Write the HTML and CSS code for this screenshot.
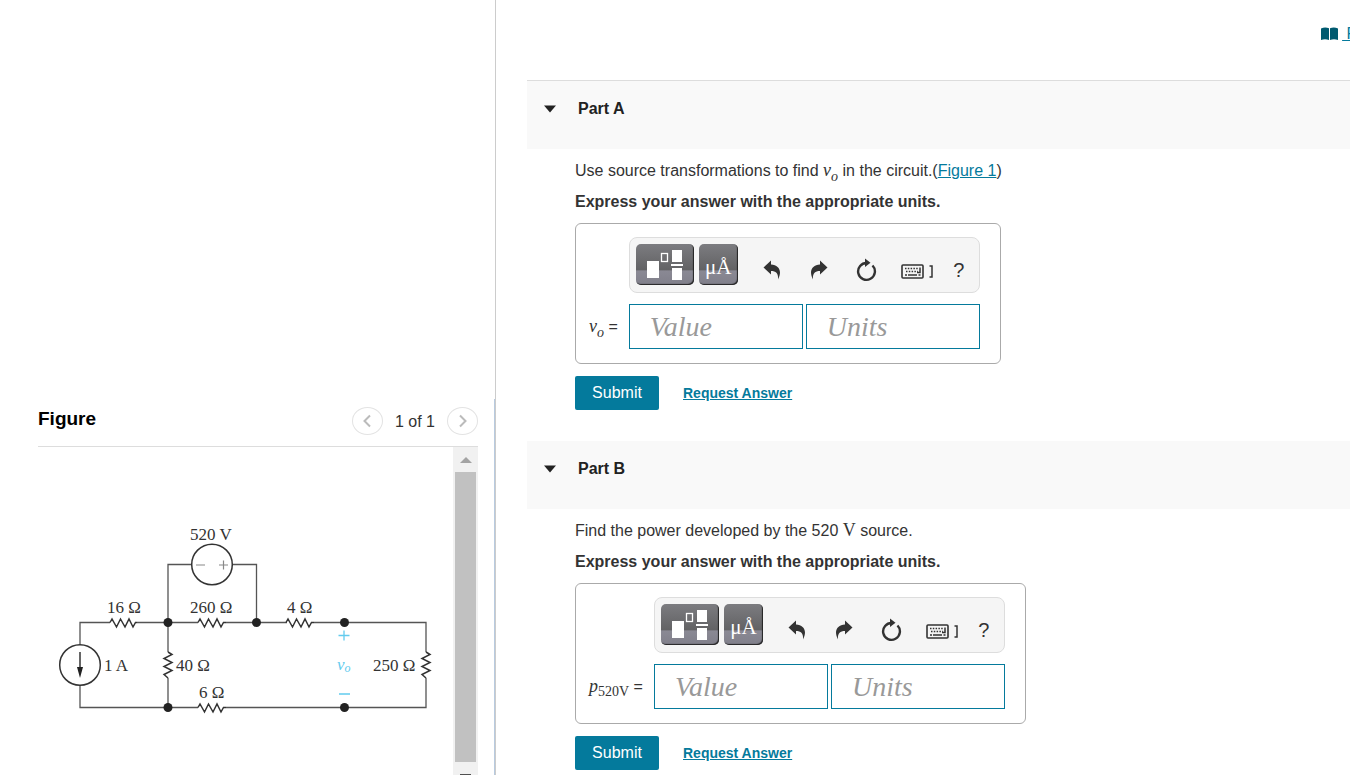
FILE: index.html
```html
<!DOCTYPE html>
<html lang="en">
<head>
<meta charset="utf-8">
<meta name="viewport" content="width=device-width, initial-scale=1">
<title>Source transformations</title>
<link rel="stylesheet" href="styles.css">
</head>
<body>
<svg class="defs" aria-hidden="true">
  <defs>
    <symbol id="i-template" viewBox="0 0 38 32">
      <g fill="#fff"><rect x="1" y="12" width="12" height="17"/><rect x="26" y="1" width="10" height="12"/><rect x="26" y="19" width="10" height="12"/><rect x="25" y="15" width="12" height="2"/></g>
      <rect x="15.500" y="4.500" width="6" height="8" fill="none" stroke="#fff" stroke-width="1.300"/>
    </symbol>
    <symbol id="i-undo" viewBox="0 0 18 20">
      <path fill="#333" d="M.5 7.500 8 .5v4C16 5 19.500 11 15 19.500 15.500 14 13.500 11 8 11v3.500z"/>
    </symbol>
    <symbol id="i-reset" viewBox="0 0 22 24">
      <path d="M12 5A8.400 8.400 0 1 0 17.500 7.500" fill="none" stroke="#333" stroke-width="2.400"/>
      <path d="M10 .5 15.500 4.800 10 9z" fill="#333"/>
    </symbol>
    <symbol id="i-keyboard" viewBox="0 0 33 16">
      <rect x="1" y="1" width="21" height="13" rx="1" fill="none" stroke="#333" stroke-width="1.600"/>
      <path d="M4 4.500h13M5 7.500h12" stroke="#333" stroke-width="1.600" stroke-dasharray="1.500 1.300"/>
      <path d="M4 11h2M7 11h9M17.500 11h2M19 3.500v5h-3" fill="none" stroke="#333" stroke-width="1.500"/>
      <path d="M28.500 2h2.500v11h-2.500" fill="none" stroke="#333" stroke-width="1.500"/>
    </symbol>
    <symbol id="i-caret" viewBox="0 0 14 8"><path d="M1 .5h12L7 7.500z" fill="#222"/></symbol>
  </defs>
</svg>
<div class="page">
  <aside class="side">
    <div class="side-top"></div>
    <section class="figure-panel">
      <header class="figure-head">
        <h2>Figure</h2>
        <nav class="pager" aria-label="Figures">
          <button type="button" aria-label="Previous figure"><svg width="10" height="14" viewBox="0 0 10 14"><path d="M8 1.500 2.500 7 8 12.500"/></svg></button>
          <span>1 of 1</span>
          <button type="button" aria-label="Next figure"><svg width="10" height="14" viewBox="0 0 10 14"><path d="M2 1.500 7.500 7 2 12.500"/></svg></button>
        </nav>
      </header>
      <div class="figure-view">
        <svg class="circuit" viewBox="38 447 415 328" role="img" aria-label="Circuit diagram">
          <g fill="none" stroke="#555" stroke-width="1.300">
            <path d="M80 644.500V622.500h30M137 622.500h61M226 622.500h61M314 622.500h112V652M426 678v29.500H226M198 707.500H80V685.500M168 622v30M168 678v29M168 622v-57.500h23.500M232.500 564.500h24V622"/>
          </g>
          <g fill="none" stroke="#333" stroke-width="1.500" stroke-linejoin="miter">
            <path d="M110 622.500l2-3.500 4.500 8 4-8 4.500 8 4-8 4 8 2.500-4.500h1.500"/>
            <path d="M198 622.500l2-3.500 4.500 8 4-8 4.500 8 4-8 4 8 2.500-4.500h2.500"/>
            <path d="M286 622.500l2-3.500 4.500 8 4-8 4.500 8 4-8 4 8 2.500-4.500h2.500"/>
            <path d="M198 707.500l2-3.500 4.500 8 4-8 4.500 8 4-8 4 8 2.500-4.500h2.500"/>
            <path d="M168 652l4 2.500-8 4 8 4-8 4 8 4-8 4 4 3.500"/>
            <path d="M426 652l4 2.500-8 4 8 4-8 4 8 4-8 4 4 3.500"/>
            <circle cx="212" cy="564.500" r="20.300"/><circle cx="80" cy="665" r="20.300"/>
            <path d="M80 652v18"/>
          </g>
          <path d="M77 667h6l-3 11z" fill="#222"/>
          <path d="M196 565h9M219 565h9M223.500 560.500v9" stroke="#888" stroke-width="1.200"/>
          <g fill="#222"><circle cx="168" cy="622.500" r="4.500"/><circle cx="256.500" cy="622.500" r="4.500"/><circle cx="344.500" cy="622.500" r="4.500"/><circle cx="168" cy="707.500" r="4.500"/><circle cx="344.500" cy="707.500" r="4.500"/></g>
          <path d="M338.500 635.500h11M344 630.500v10M339 694h11" stroke="#62cbee" stroke-width="1.300"/>
          <g class="circuit-text">
            <text x="190" y="540">520 V</text><text x="107" y="613">16 Ω</text><text x="190" y="613">260 Ω</text>
            <text x="287" y="613">4 Ω</text><text x="104" y="671">1 A</text><text x="176" y="671">40 Ω</text>
            <text x="199" y="698">6 Ω</text><text x="373" y="671">250 Ω</text>
            <text x="337" y="670" class="circuit-v">v<tspan class="circuit-sub" dy="2">o</tspan></text>
          </g>
        </svg>
        <div class="scrollbar" aria-hidden="true">
          <span class="arrow-up"></span>
          <span class="thumb"></span>
          <span class="arrow-down"></span>
        </div>
      </div>
    </section>
  </aside>
  <main class="main">
    <div class="resources">
      <svg width="17" height="14" viewBox="0 0 17 14"><path d="M0 1.500Q4-.2 8 1.300V13Q4 11.500 0 13zM9 1.300Q13-.2 17 1.500V13Q13 11.500 9 13z" fill="#005a70"/></svg>
      <a href="#review">&nbsp;Review</a>
    </div>

    <section class="part">
      <button type="button" class="part-head part-head-first" aria-expanded="true">
        <svg width="14" height="8"><use href="#i-caret"/></svg><span>Part A</span>
      </button>
      <div class="part-body">
        <p>Use source transformations to find <i class="math">v<sub>o</sub></i> in the circuit.(<a href="#figure">Figure 1</a>)</p>
        <p class="instruct">Express your answer with the appropriate units.</p>
        <div class="answer">
          <div class="toolbar">
            <button type="button" class="tool tool-wide" aria-label="Templates"><svg width="38" height="32"><use href="#i-template"/></svg></button>
            <button type="button" class="tool tool-symbol">μÅ</button>
            <div class="actions">
              <button type="button" aria-label="Undo"><svg width="18" height="20"><use href="#i-undo"/></svg></button>
              <button type="button" aria-label="Redo"><svg class="flip" width="18" height="20"><use href="#i-undo"/></svg></button>
              <button type="button" aria-label="Reset"><svg width="22" height="24"><use href="#i-reset"/></svg></button>
              <button type="button" class="keys" aria-label="Keyboard shortcuts"><svg width="33" height="16"><use href="#i-keyboard"/></svg></button>
              <button type="button" class="help">?</button>
            </div>
          </div>
          <label for="value-a"><i class="math">v<sub>o</sub></i> =</label>
          <div class="fields">
            <input id="value-a" type="text" placeholder="Value">
            <input type="text" placeholder="Units" aria-label="Units">
          </div>
        </div>
        <div class="submit-row"><button type="button" class="submit">Submit</button><a href="#answer-a">Request Answer</a></div>
      </div>
    </section>

    <section class="part">
      <button type="button" class="part-head" aria-expanded="true">
        <svg width="14" height="8"><use href="#i-caret"/></svg><span>Part B</span>
      </button>
      <div class="part-body">
        <p>Find the power developed by the 520 <span class="math">V</span> source.</p>
        <p class="instruct">Express your answer with the appropriate units.</p>
        <div class="answer">
          <div class="toolbar">
            <button type="button" class="tool tool-wide" aria-label="Templates"><svg width="38" height="32"><use href="#i-template"/></svg></button>
            <button type="button" class="tool tool-symbol">μÅ</button>
            <div class="actions">
              <button type="button" aria-label="Undo"><svg width="18" height="20"><use href="#i-undo"/></svg></button>
              <button type="button" aria-label="Redo"><svg class="flip" width="18" height="20"><use href="#i-undo"/></svg></button>
              <button type="button" aria-label="Reset"><svg width="22" height="24"><use href="#i-reset"/></svg></button>
              <button type="button" class="keys" aria-label="Keyboard shortcuts"><svg width="33" height="16"><use href="#i-keyboard"/></svg></button>
              <button type="button" class="help">?</button>
            </div>
          </div>
          <label for="value-b"><i class="math">p</i><sub class="math">520V</sub> =</label>
          <div class="fields">
            <input id="value-b" type="text" placeholder="Value">
            <input type="text" placeholder="Units" aria-label="Units">
          </div>
        </div>
        <div class="submit-row"><button type="button" class="submit">Submit</button><a href="#answer-b">Request Answer</a></div>
      </div>
    </section>
  </main>
</div>
</body>
</html>
```
FILE: styles.css
```css
* { box-sizing: border-box; }
body { margin: 0; font: 16px/20px "Liberation Sans", Arial, sans-serif; color: #333; background: #fff; }
button { font: inherit; color: inherit; border: 0; padding: 0; background: none; cursor: pointer; }
a { color: #047a9c; }
.defs { position: absolute; width: 0; height: 0; }

.page { display: grid; grid-template-columns: 11fr 19fr; height: 100vh; overflow: hidden; }

.side { display: grid; grid-template-rows: 17fr 16fr; min-height: 0; }
.figure-panel { display: flex; flex-direction: column; min-height: 0; padding: 0 16px 0 38px; border-right: 1px solid #b8cbe0; }
.figure-head { display: flex; align-items: center; justify-content: space-between; flex: none; height: 48px; padding-bottom: 3px; border-bottom: 1px solid #ddd; }
.figure-head h2 { margin: 0; padding-bottom: 5px; font-size: 19px; line-height: 24px; color: #000; }
.pager { display: flex; align-items: center; gap: 12px; }
.pager span { padding-top: 2px; }
.pager button { display: grid; place-items: center; width: 31px; height: 28px; border: 1px solid #e3e3e3; border-radius: 50%; }
.pager path { fill: none; stroke: #bbb; stroke-width: 2; }
.figure-view { display: flex; flex: 1; min-height: 0; overflow: hidden; }
.circuit { flex: 1; min-width: 0; align-self: flex-start; }
.circuit-text { font: 17px "Liberation Serif", serif; fill: #333; }
.circuit-v { font-style: italic; fill: #62cbee; }
.circuit-sub { font-size: 12px; }
.scrollbar { display: flex; flex-direction: column; align-items: center; flex: none; width: 25px; background: #f1f1f1; }
.arrow-up { margin: 10px 0 9px; border: 6px solid transparent; border-top: 0; border-bottom-color: #a3a3a3; }
.thumb { flex: 1; width: 21px; background: #c1c1c1; }
.arrow-down { width: 11px; height: 13px; border-bottom: 1px solid #505050; }

.main { min-width: 0; padding-left: 31px; border-left: 1px solid #ccc; overflow: hidden; }
.resources { display: flex; justify-content: flex-end; align-items: center; height: 80px; padding-bottom: 13px; margin-right: -49px; gap: 4px; }

.part-head { display: flex; align-items: center; gap: 21px; width: 100%; height: 68px; padding: 0 16px 13px; background: #f9f9f9; color: #222; font-weight: bold; text-align: left; }
.part-head-first { height: 69px; border-top: 1px solid #ddd; }
.part-body { padding: 12px 16px 31px 48px; }
.part-body p { margin: 0 0 11px; height: 20px; white-space: nowrap; }
.part-body .instruct { font-weight: bold; }
.math { font-family: "Liberation Serif", serif; font-size: 18px; line-height: 0; }
.math sub, sub.math { font-size: 14px; line-height: 0; }

.answer { display: inline-grid; grid-template-columns: auto auto; row-gap: 11px; align-items: center; padding: 13px 20px 14px 13px; border: 1px solid #aaa; border-radius: 6px; vertical-align: top; }
.answer label { padding-right: 11px; white-space: nowrap; }
.toolbar { grid-column: 2; display: flex; gap: 5px; height: 56px; padding: 6px 4px 6px 6px; border: 1px solid #ddd; border-radius: 8px; background: #f5f5f5; }
.tool { display: grid; place-items: center; width: 39px; height: 41px; border-radius: 5px; color: #fff; background: linear-gradient(#7c7c80, #626264 64%, #8a8994 65%, #807f8a); box-shadow: inset -1px -1px 1px #222; }
.tool-symbol { padding-top: 4px; font: 21px/24px "Liberation Serif", serif; }
.tool-wide { width: 58px; }
.actions { display: flex; height: 41px; padding: 10px 0 0 6px; }
.actions button { display: grid; place-items: center; width: 47px; }
.actions .keys { width: 55px; padding-top: 5px; }
.actions .help { width: 28px; font-size: 20px; }
.flip { transform: scaleX(-1); }
.fields { display: flex; gap: 3px; }
.fields input { width: 174px; height: 45px; padding: 0 20px; border: 1px solid #047a9c; border-radius: 0; background: #fff; font: italic 28px "Liberation Serif", serif; color: #333; }
.fields input::placeholder { color: #999; opacity: 1; }

.submit-row { display: flex; align-items: center; gap: 24px; margin-top: 12px; }
.submit { width: 84px; height: 34px; border-radius: 2px; background: #047a9c; color: #fff; }
.submit-row a { font-size: 14px; font-weight: bold; }
```
